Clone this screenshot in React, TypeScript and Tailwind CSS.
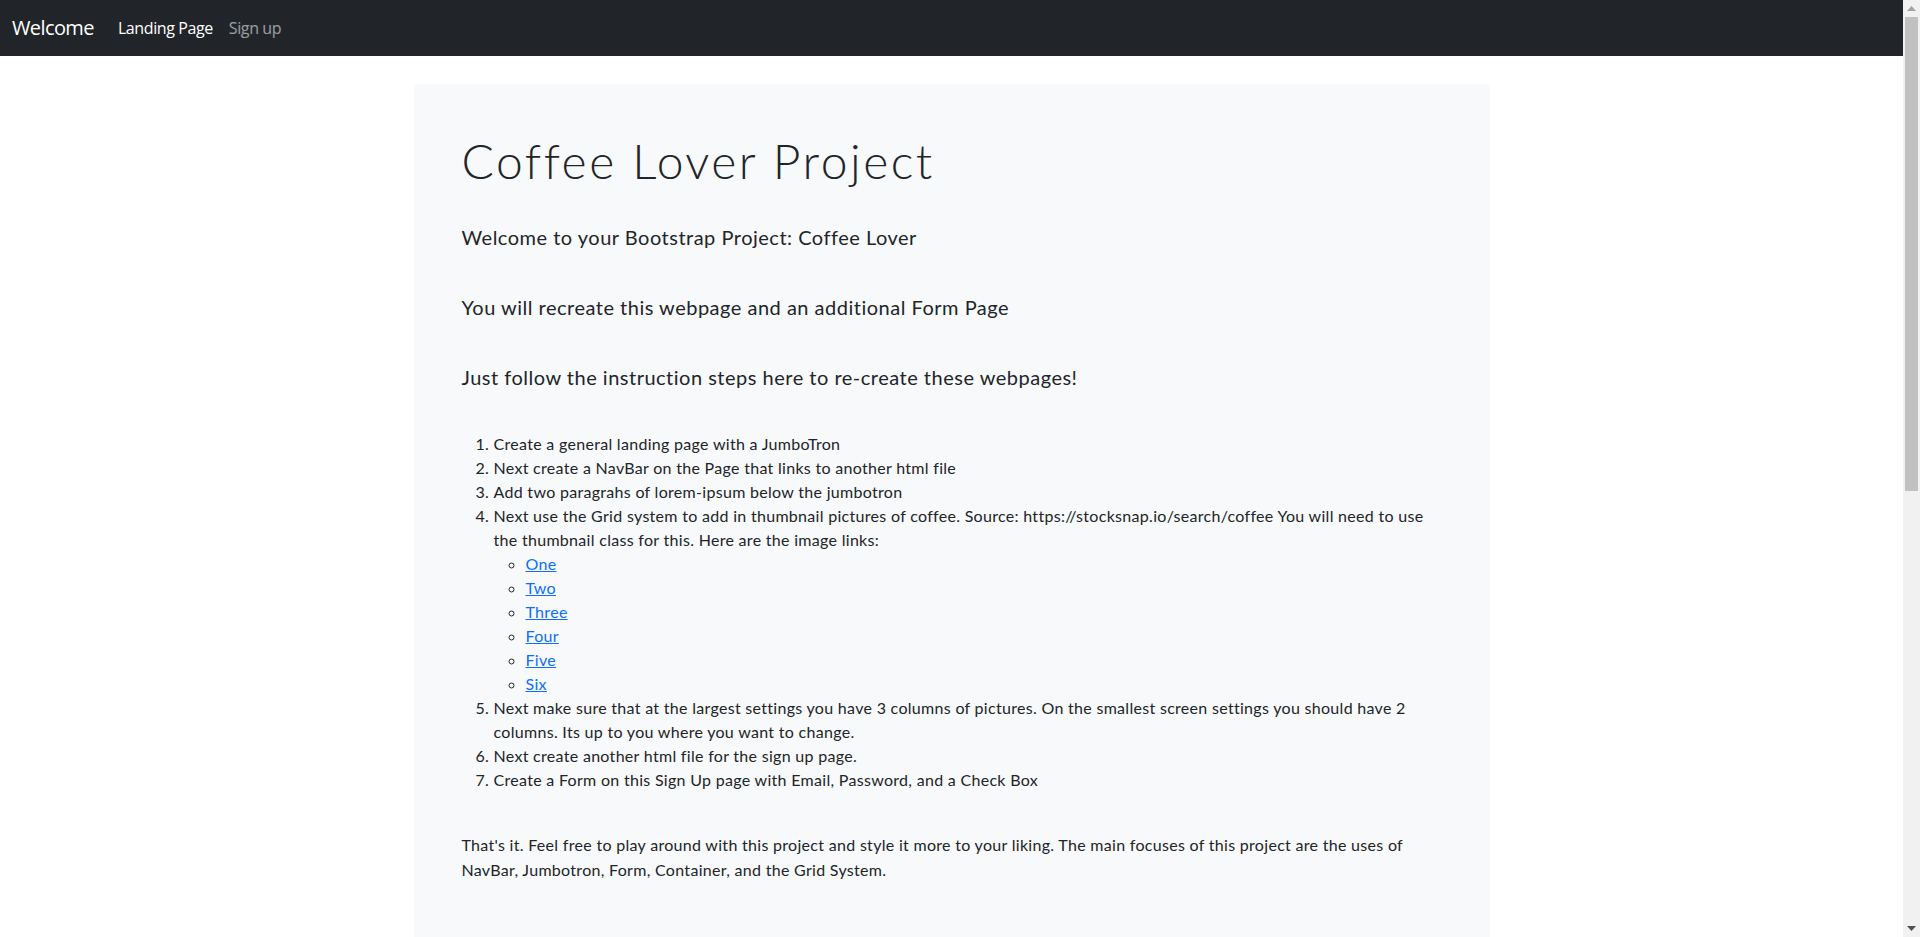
import React from "react";

const steps: React.ReactNode[] = [
    "Create a general landing page with a JumboTron",
    "Next create a NavBar on the Page that links to another html file",
    "Add two paragrahs of lorem-ipsum below the jumbotron",
];

const imageLinks = ["One", "Two", "Three", "Four", "Five", "Six"];

const lorem =
    "Lorem ipsum dolor sit amet, consectetur adipiscing elit, sed do eiusmod tempor incididunt ut labore et dolore magna aliqua. Ut enim ad minim veniam, quis nostrud exercitation ullamco laboris nisi ut aliquip ex ea commodo consequat. Duis aute irure dolor in reprehenderit in voluptate velit esse cillum dolore eu fugiat nulla pariatur. Excepteur sint occaecat cupidatat non proident, sunt in culpa qui officia deserunt mollit anim id est laborum.";

function NavBar() {
    return (
        <nav className="h-14 shrink-0 bg-[#212529] px-3 flex items-center font-['Open_Sans',sans-serif]">
            <a href="#" className="text-white text-[20px] mr-4 tracking-[-0.6px]">
                Welcome
            </a>
            <div className="flex items-center text-[16px] tracking-[-0.4px]">
                <a href="#" className="px-2 text-white">
                    Landing Page
                </a>
                <a href="#" className="px-2 text-white/55">
                    Sign up
                </a>
            </div>
        </nav>
    );
}

function Jumbotron() {
    return (
        <div className="bg-[#f8f9fa] rounded-[5px] p-12 text-[#212529]">
            <h1 className="text-[48px] leading-[1.2] font-light tracking-[2.5px] mb-8">
                Coffee Lover Project
            </h1>
            <div className="text-[20px] leading-[30px] tracking-[0.5px]">
                <p className="mb-10">
                    Welcome to your Bootstrap Project: Coffee Lover
                </p>
                <p className="mb-10">
                    You will recreate this webpage and an additional Form Page
                </p>
                <p className="mb-10">
                    Just follow the instruction steps here to re-create these
                    webpages!
                </p>
            </div>
            <div className="text-[16px] tracking-[0.3px]">
                <ol className="list-decimal pl-8 leading-6 mb-10">
                    {steps.map((s, i) => (
                        <li key={i}>{s}</li>
                    ))}
                    <li>
                        Next use the Grid system to add in thumbnail pictures of
                        coffee. Source: https://stocksnap.io/search/coffee You
                        will need to use the thumbnail class for this. Here are
                        the image links:
                        <ul className="list-[circle] pl-8">
                            {imageLinks.map((l) => (
                                <li key={l}>
                                    <a
                                        href="#"
                                        className="text-[#0d6efd] underline"
                                    >
                                        {l}
                                    </a>
                                </li>
                            ))}
                        </ul>
                    </li>
                    <li>
                        Next make sure that at the largest settings you have 3
                        columns of pictures. On the smallest screen settings you
                        should have 2 columns. Its up to you where you want to
                        change.
                    </li>
                    <li>Next create another html file for the sign up page.</li>
                    <li>
                        Create a Form on this Sign Up page with Email, Password,
                        and a Check Box
                    </li>
                </ol>
                <p className="leading-[25px] mb-4">
                    That's it. Feel free to play around with this project and
                    style it more to your liking. The main focuses of this
                    project are the uses of NavBar, Jumbotron, Form, Container,
                    and the Grid System.
                </p>
            </div>
        </div>
    );
}

function ScrollBar() {
    return (
        <div className="w-[17px] shrink-0 h-full bg-[#f1f1f1] flex flex-col items-center">
            <div className="h-[17px] w-full flex items-center justify-center">
                <svg width="9" height="5" viewBox="0 0 9 5">
                    <path d="M0 5 L4.5 0 L9 5 Z" fill="#a3a3a3" />
                </svg>
            </div>
            <div className="w-[13px] h-[474px] bg-[#c1c1c1]" />
            <div className="flex-1" />
            <div className="h-[17px] w-full flex items-center justify-center">
                <svg width="9" height="5" viewBox="0 0 9 5">
                    <path d="M0 0 L9 0 L4.5 5 Z" fill="#505050" />
                </svg>
            </div>
        </div>
    );
}

export default function App() {
    return (
        <div className="h-screen flex bg-white font-['Lato',sans-serif]">
            <div className="flex-1 min-w-0 overflow-y-auto [scrollbar-width:none]">
                <NavBar />
                <main className="w-[1076px] mx-auto pt-7 pb-12">
                    <Jumbotron />
                    <div className="mt-8 space-y-4 text-[16px] leading-6 text-[#212529]">
                        <p>{lorem}</p>
                        <p>{lorem}</p>
                    </div>
                    <div className="mt-8 grid grid-cols-3 gap-6">
                        {imageLinks.map((l) => (
                            <div
                                key={l}
                                className="h-[220px] rounded bg-[#e9ecef] border border-[#dee2e6]"
                            />
                        ))}
                    </div>
                </main>
            </div>
            <ScrollBar />
        </div>
    );
}
